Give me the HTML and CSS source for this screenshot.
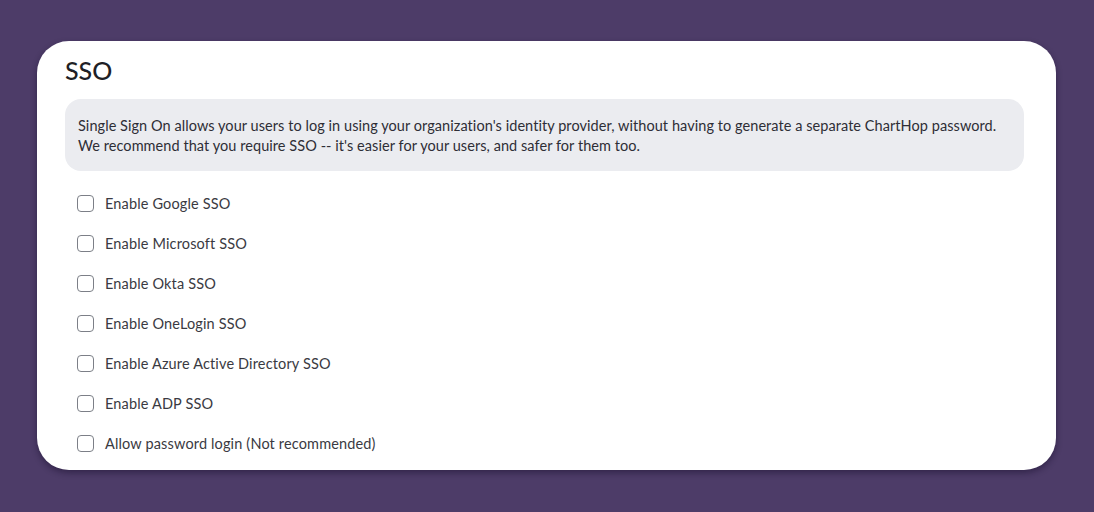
FILE: index.html
```html
<!DOCTYPE html>
<html>
<head>
<meta charset="utf-8">
<link rel="stylesheet" href="styles.css">
</head>
<body>
<div class="page">
  <section class="card">
    <h1 class="title">SSO</h1>
    <div class="info">
      <p>Single Sign On allows your users to log in using your organization's identity provider, without having to generate a separate ChartHop password.</p>
      <p>We recommend that you require SSO -- it's easier for your users, and safer for them too.</p>
    </div>
    <ul class="options">
      <li class="option"><span class="box"></span><span class="label">Enable Google SSO</span></li>
      <li class="option"><span class="box"></span><span class="label">Enable Microsoft SSO</span></li>
      <li class="option"><span class="box"></span><span class="label">Enable Okta SSO</span></li>
      <li class="option"><span class="box"></span><span class="label">Enable OneLogin SSO</span></li>
      <li class="option"><span class="box"></span><span class="label">Enable Azure Active Directory SSO</span></li>
      <li class="option"><span class="box"></span><span class="label">Enable ADP SSO</span></li>
      <li class="option"><span class="box"></span><span class="label">Allow password login (Not recommended)</span></li>
    </ul>
  </section>
</div>
</body>
</html>
```
FILE: styles.css
```css
* { box-sizing: border-box; }
html, body { margin: 0; padding: 0; }
body {
  background: #4d3c68;
  font-family: "Lato", "Noto Sans", sans-serif;
  color: #2b2b33;
  width: 1094px;
  height: 512px;
  overflow: hidden;
}
.page {
  padding: 41px 38px 0 37px;
}
.card {
  background: #ffffff;
  border-radius: 32px;
  padding: 13px 32px 7px 28px;
  box-shadow: 0 3px 6px rgba(20, 10, 40, 0.45);
  height: 429px;
}
.title {
  margin: 0;
  font-size: 25px;
  line-height: 32px;
  font-weight: 500;
  color: #1f1f26;
}
.info {
  margin-top: 13px;
  background: #ebecf0;
  border-radius: 16px;
  padding: 17px 13px 15px;
  font-size: 14.5px;
  letter-spacing: 0.06px;
  line-height: 20px;
  color: #2e2e36;
}
.info p { margin: 0; }
.options {
  list-style: none;
  margin: 12px 0 0;
  padding: 0;
}
.option {
  display: flex;
  align-items: center;
  height: 40px;
  padding-left: 12px;
}
.box {
  width: 17px;
  height: 17px;
  border: 1.5px solid #7c7f87;
  border-radius: 4px;
  flex: none;
}
.label {
  margin-left: 11px;
  font-size: 14.5px;
  letter-spacing: 0.15px;
  color: #3a3a42;
}
```
